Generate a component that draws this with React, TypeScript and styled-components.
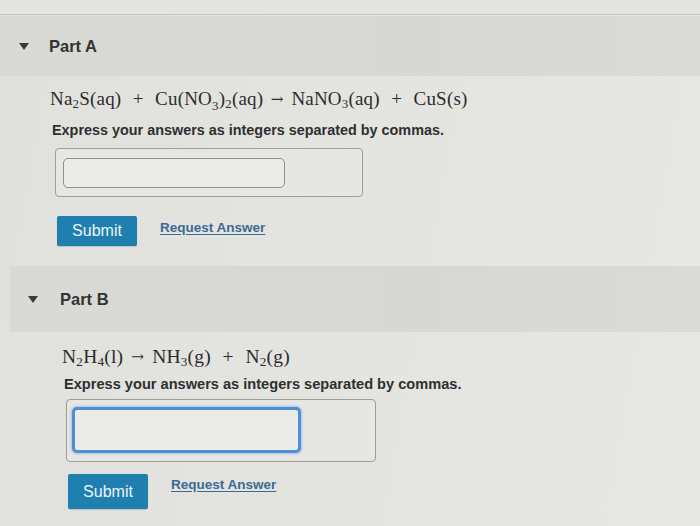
import React from "react";
import styled, { createGlobalStyle } from "styled-components";

const Global = createGlobalStyle`
  html, body { margin: 0; padding: 0; }
  body {
    background: #e2e2df;
    font-family: "Liberation Sans", Arial, Helvetica, sans-serif;
    color: #2f2f2f;
  }
`;

const Page = styled.div`
  width: 700px;
  height: 526px;
  overflow: hidden;
  display: flex;
  flex-direction: column;
  background: linear-gradient(100deg, #e0e0dd 0%, #e4e4e1 55%, #e7e7e4 100%);
`;

const TopStrip = styled.div`
  height: 14px;
  flex: none;
  background: #e4e4e2;
  border-bottom: 1px solid #c6c6c3;
`;

const Part = styled.section<{ $gap: number }>`
  display: flex;
  flex-direction: column;
  margin-top: ${(p) => p.$gap}px;
`;

const PartHeader = styled.div<{ $h: number; $left: number; $pad: number; $gap: number }>`
  display: flex;
  align-items: center;
  gap: ${(p) => p.$gap}px;
  height: ${(p) => p.$h}px;
  margin-left: ${(p) => p.$left}px;
  padding-left: ${(p) => p.$pad}px;
  background: linear-gradient(90deg, #d9d9d6 0%, #d7d7d4 60%, #dadad7 100%);
`;

const Caret = styled.span`
  width: 0;
  height: 0;
  border-left: 5.5px solid transparent;
  border-right: 5.5px solid transparent;
  border-top: 7px solid #3a3a3c;
  margin-top: 1px;
`;

const PartTitle = styled.h2<{ $size: number }>`
  margin: 0;
  font-size: ${(p) => p.$size}px;
  font-weight: 700;
  color: #333;
`;

const PartBody = styled.div<{ $indent: number }>`
  display: flex;
  flex-direction: column;
  align-items: flex-start;
  padding-left: ${(p) => p.$indent}px;
`;

const Equation = styled.div<{ $size: number; $lh: number; $top: number }>`
  font-family: "Liberation Serif", "DejaVu Serif", serif;
  font-size: ${(p) => p.$size}px;
  line-height: ${(p) => p.$lh}px;
  margin-top: ${(p) => p.$top}px;
  color: #2c2c2c;
  white-space: nowrap;
  letter-spacing: 0.2px;
`;

const Sub = styled.sub<{ $drop?: number }>`
  font-size: 0.68em;
  vertical-align: ${(p) => -(p.$drop ?? 0.22)}em;
  line-height: 0;
`;

const Op = styled.span`
  margin: 0 0.6em;
`;

const Arrow = styled.span`
  display: inline-block;
  margin: 0 0.5em;
  font-family: "DejaVu Serif", serif;
  font-size: 0.8em;
  transform: translateY(-1px);
`;

const Prompt = styled.p<{ $top: number; $size: number }>`
  margin: ${(p) => p.$top}px 0 0 2px;
  font-size: ${(p) => p.$size}px;
  line-height: 20px;
  font-weight: 700;
  color: #2f2f2f;
`;

const AnswerBox = styled.div<{ $w: number; $h: number; $top: number; $left: number; $padX: number; $padY: number }>`
  box-sizing: border-box;
  width: ${(p) => p.$w}px;
  height: ${(p) => p.$h}px;
  margin: ${(p) => p.$top}px 0 0 ${(p) => p.$left}px;
  padding: ${(p) => p.$padY}px ${(p) => p.$padX}px;
  border: 1px solid #9d9d9a;
  border-radius: 4px;
  background: #e6e6e3;
`;

const AnswerInput = styled.input<{ $w: number; $h: number; $focused?: boolean }>`
  box-sizing: border-box;
  display: block;
  width: ${(p) => p.$w}px;
  height: ${(p) => p.$h}px;
  border-radius: 5px;
  background: #ebebe9;
  outline: none;
  border: ${(p) => (p.$focused ? "3.5px solid #4f8fd6" : "1.5px solid #8f8f8c")};
  box-shadow: ${(p) => (p.$focused ? "0 0 2px 1px rgba(90,150,220,0.45)" : "none")};
`;

const Actions = styled.div<{ $top: number; $left: number }>`
  display: flex;
  align-items: center;
  gap: 23px;
  margin: ${(p) => p.$top}px 0 0 ${(p) => p.$left}px;
`;

const SubmitButton = styled.button<{ $h: number }>`
  width: 80px;
  height: ${(p) => p.$h}px;
  border: none;
  border-radius: 2px;
  background: #1f7fae;
  color: #eef4f8;
  font-family: "Liberation Sans", Arial, sans-serif;
  font-size: 16px;
  padding: 0;
  box-shadow: 0 1px 1px rgba(0, 0, 0, 0.15);
`;

const RequestLink = styled.a<{ $shift: number }>`
  font-size: 13.5px;
  font-weight: 700;
  color: #3c6b92;
  text-decoration: underline;
  text-underline-offset: 2px;
  transform: translateY(${(p) => p.$shift}px);
  cursor: pointer;
`;

export default function App() {
  return (
    <>
      <Global />
      <Page>
        <TopStrip />

        <Part $gap={1}>
          <PartHeader $h={60} $left={0} $pad={19} $gap={20}>
            <Caret />
            <PartTitle $size={16.5}>Part A</PartTitle>
          </PartHeader>
          <PartBody $indent={50}>
            <Equation $size={19} $lh={24} $top={11}>
              Na<Sub>2</Sub>S(aq)<Op>+</Op>Cu(NO<Sub $drop={0.4}>3</Sub>)<Sub>2</Sub>(aq)
              <Arrow>→</Arrow>NaNO<Sub>3</Sub>(aq)<Op>+</Op>CuS(s)
            </Equation>
            <Prompt $top={8} $size={14.4}>Express your answers as integers separated by commas.</Prompt>
            <AnswerBox $w={308} $h={49} $top={8} $left={5} $padX={7} $padY={9}>
              <AnswerInput $w={222} $h={30} aria-label="Part A answer" />
            </AnswerBox>
            <Actions $top={19} $left={7}>
              <SubmitButton $h={30}>Submit</SubmitButton>
              <RequestLink $shift={-4}>Request Answer</RequestLink>
            </Actions>
          </PartBody>
        </Part>

        <Part $gap={20}>
          <PartHeader $h={66} $left={10} $pad={18} $gap={22}>
            <Caret />
            <PartTitle $size={16.5}>Part B</PartTitle>
          </PartHeader>
          <PartBody $indent={62}>
            <Equation $size={19.5} $lh={26} $top={12}>
              N<Sub>2</Sub>H<Sub>4</Sub>(l)<Arrow>→</Arrow>NH<Sub>3</Sub>(g)<Op>+</Op>N<Sub>2</Sub>(g)
            </Equation>
            <Prompt $top={3} $size={14.6}>Express your answers as integers separated by commas.</Prompt>
            <AnswerBox $w={310} $h={63} $top={5} $left={4} $padX={5} $padY={7}>
              <AnswerInput $w={229} $h={46} $focused aria-label="Part B answer" />
            </AnswerBox>
            <Actions $top={12} $left={6}>
              <SubmitButton $h={35}>Submit</SubmitButton>
              <RequestLink $shift={-7}>Request Answer</RequestLink>
            </Actions>
          </PartBody>
        </Part>
      </Page>
    </>
  );
}
